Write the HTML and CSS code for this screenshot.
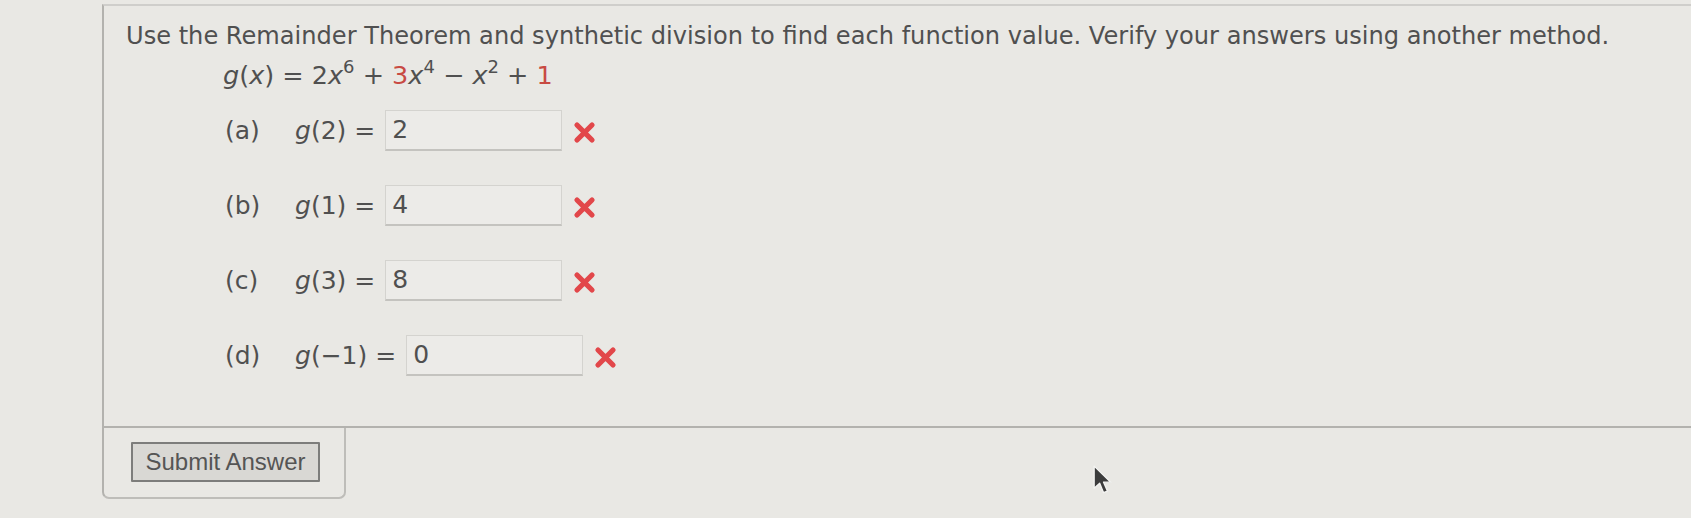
FILE: index.html
```html
<!DOCTYPE html>
<html lang="en">
<head>
<meta charset="utf-8">
<title>Remainder Theorem</title>
<link rel="stylesheet" href="styles.css">
</head>
<body>
<div class="page">
  <div class="question">
    <p class="prompt">Use the Remainder Theorem and synthetic division to find each function value. Verify your answers using another method.</p>
    <div class="func"><i>g</i>(<i>x</i>) = 2<i>x</i><sup>6</sup> + <span class="hl">3</span><i>x</i><sup>4</sup> − <i>x</i><sup>2</sup> + <span class="hl">1</span></div>
    <div class="parts">
      <div class="part">
        <span class="lbl">(a)</span>
        <span class="expr"><i>g</i>(2) =</span>
        <span class="field">2</span>
        <svg class="wrong" viewBox="0 0 20 20"><path d="M4 4 L16 16 M16 4 L4 16"/></svg>
      </div>
      <div class="part">
        <span class="lbl">(b)</span>
        <span class="expr"><i>g</i>(1) =</span>
        <span class="field">4</span>
        <svg class="wrong" viewBox="0 0 20 20"><path d="M4 4 L16 16 M16 4 L4 16"/></svg>
      </div>
      <div class="part">
        <span class="lbl">(c)</span>
        <span class="expr"><i>g</i>(3) =</span>
        <span class="field">8</span>
        <svg class="wrong" viewBox="0 0 20 20"><path d="M4 4 L16 16 M16 4 L4 16"/></svg>
      </div>
      <div class="part">
        <span class="lbl">(d)</span>
        <span class="expr"><i>g</i>(−1) =</span>
        <span class="field">0</span>
        <svg class="wrong" viewBox="0 0 20 20"><path d="M4 4 L16 16 M16 4 L4 16"/></svg>
      </div>
    </div>
  </div>
  <div class="submit-tab">
    <button class="submit" type="button">Submit Answer</button>
  </div>
  <svg class="cursor" viewBox="0 0 18 28"><path d="M1 1 L1 21 L6 16.5 L9.5 25 L13 23.5 L9.5 15.5 L16 15.5 Z"/></svg>
</div>
</body>
</html>
```

FILE: styles.css
```css
html, body {
  margin: 0;
  padding: 0;
  background: #e9e8e4;
}

.page {
  position: relative;
  width: 1691px;
  height: 518px;
  overflow: hidden;
  padding-top: 4px;
  box-sizing: border-box;
  font-family: "DejaVu Sans", Verdana, sans-serif;
  color: #505050;
}

.question {
  margin-left: 102px;
  border-left: 2px solid #b3b2ae;
  border-top: 2px solid #cfcecb;
  border-bottom: 2px solid #b3b2ae;
  padding: 0 0 50px 22px;
}

.prompt {
  margin: 0;
  padding-top: 15px;
  font-size: 24.1px;
  line-height: 30px;
  white-space: nowrap;
}

.func {
  margin: 9px 0 0 97px;
  font-size: 25.5px;
  line-height: 30px;
}

.func sup {
  font-size: 18px;
  vertical-align: 11px;
  line-height: 0;
}

.hl {
  color: #c84a42;
}

.parts {
  margin: 20px 0 0 99px;
  display: flex;
  flex-direction: column;
  gap: 34px;
}

.part {
  display: flex;
  align-items: center;
  height: 41px;
  font-size: 25px;
}

.lbl {
  width: 70px;
}

.expr {
  margin-right: 10px;
}

.field {
  box-sizing: border-box;
  width: 177px;
  height: 41px;
  padding: 4px 6px 0;
  line-height: 30px;
  background: #ecebe8;
  border: 1px solid #d4d3cf;
  border-bottom: 2px solid #c4c3bf;
}

.wrong {
  width: 25px;
  height: 25px;
  margin-left: 10px;
  margin-top: 4px;
}

.wrong path {
  stroke: #e2474a;
  stroke-width: 4.2;
  stroke-linecap: round;
  fill: none;
}

.submit-tab {
  margin-left: 102px;
  width: 244px;
  box-sizing: border-box;
  border-left: 2px solid #b3b2ae;
  border-right: 2px solid #bebdb9;
  border-bottom: 2px solid #bebdb9;
  border-radius: 0 0 7px 7px;
  padding: 14px 0 15px 27px;
}

.submit {
  display: block;
  width: 189px;
  height: 40px;
  padding: 0;
  font-family: "Liberation Sans", Arial, sans-serif;
  font-size: 24px;
  color: #555555;
  background: #d9d8d4;
  border: 2px solid #7d7d7b;
  border-radius: 1px;
}

.cursor {
  position: absolute;
  left: 1093px;
  top: 465px;
  width: 20px;
  height: 31px;
}

.cursor path {
  fill: #3c3c3c;
  stroke: #f4f4f2;
  stroke-width: 1.2;
  stroke-linejoin: round;
}
```
